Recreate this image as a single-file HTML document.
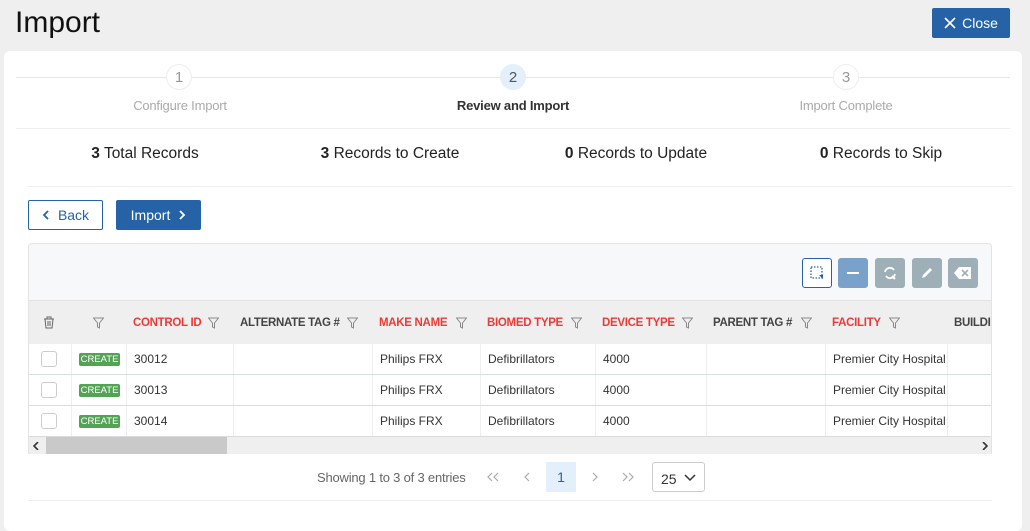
<!DOCTYPE html>
<html><head><meta charset="utf-8"><style>
*{box-sizing:border-box;margin:0;padding:0}
body{width:1030px;height:514px;overflow:hidden;background:#efefef;font-family:"Liberation Sans",Arial,sans-serif;position:relative;color:#333}
.abs{position:absolute}
h1{position:absolute;left:15px;top:6px;font-size:30px;font-weight:400;color:#111}
.close{left:932px;top:8px;width:78px;height:30px;background:#2563a6;color:#fff;font-size:14px;display:flex;align-items:center;justify-content:center;gap:6px;border-radius:2px}
.panel{left:4px;top:51px;width:1018px;height:480px;background:#fff;border-radius:6px}
.line{height:1px;background:#e6e6e6}
.circ{width:26px;height:26px;border-radius:50%;background:#fff;border:1px solid #eee;font-size:15px;color:#999;display:flex;align-items:center;justify-content:center}
.lbl{font-size:13px;color:#aaa;transform:translateX(-50%);white-space:nowrap;letter-spacing:-0.2px}
.stat{font-size:15.5px;color:#222;transform:translateX(-50%);white-space:nowrap}
.btn{height:30px;border-radius:2px;font-size:14px;display:flex;align-items:center;justify-content:center;gap:8px}
.grid{left:28px;top:243px;width:964px;height:211px;border:1px solid #e3e3e3;border-bottom:none;border-radius:4px 4px 0 0;overflow:hidden}
.tb{position:absolute;left:0;top:0;width:964px;height:57px;background:#f7f8fa;border-bottom:1px solid #e3e3e3}
.ib{position:absolute;top:14px;width:30px;height:30px;border-radius:3px;display:flex;align-items:center;justify-content:center}
.hdr{position:absolute;left:0;top:57px;width:964px;height:43px;background:#efefef;font-size:11.5px;font-weight:700;color:#444;letter-spacing:-0.3px}
.h{position:absolute;top:16px;white-space:nowrap}
.f{position:absolute;top:16px}
.red{color:#ee3a36}
.row{position:absolute;left:0;width:964px;height:31px;border-bottom:1px solid #d8dce0;font-size:12px;color:#333}
.c{position:absolute;top:0;height:30px;border-left:1px solid #eceef0;padding-left:7px;line-height:30px;white-space:nowrap}
.cb{position:absolute;left:12px;top:7px;width:16px;height:16px;border:1px solid #ccc;border-radius:3px}
.tag{position:absolute;left:7px;top:9px;width:41px;height:13px;background:#52a454;border-radius:2px}
.tag span{position:absolute;left:0;top:1px;width:41px;text-align:center;color:#fff;font-size:9.5px;line-height:11px}
.sb{position:absolute;left:0;top:193px;width:964px;height:18px;background:#efefef}
</style></head><body>
<h1>Import</h1>
<div class="abs close"><svg width="12" height="12" viewBox="0 0 12 12"><path d="M1 1L11 11M11 1L1 11" stroke="#fff" stroke-width="1.6"/></svg>Close</div>
<div class="abs panel"></div>
<div class="abs line" style="left:16px;top:77px;width:994px"></div>
<div class="abs circ" style="left:166px;top:64px">1</div>
<div class="abs circ" style="left:500px;top:64px;background:#e3effa;border-color:#e3effa;color:#555">2</div>
<div class="abs circ" style="left:833px;top:64px">3</div>
<div class="abs lbl" style="left:180px;top:98px">Configure Import</div>
<div class="abs lbl" style="left:513px;top:98px;color:#333;font-weight:700">Review and Import</div>
<div class="abs lbl" style="left:846px;top:98px">Import Complete</div>
<div class="abs line" style="left:16px;top:128px;width:994px;background:#eee"></div>
<div class="abs stat" style="left:145px;top:145px"><b>3</b> Total Records</div>
<div class="abs stat" style="left:390px;top:145px"><b>3</b> Records to Create</div>
<div class="abs stat" style="left:636px;top:145px"><b>0</b> Records to Update</div>
<div class="abs stat" style="left:881px;top:145px"><b>0</b> Records to Skip</div>
<div class="abs line" style="left:28px;top:186px;width:984px;background:#eee"></div>
<div class="abs btn" style="left:28px;top:200px;width:75px;border:1px solid #2563a6;color:#2563a6"><svg width="8" height="10" viewBox="0 0 8 10"><path d="M6 1L2 5L6 9" stroke="#2563a6" stroke-width="1.8" fill="none"/></svg>Back</div>
<div class="abs btn" style="left:116px;top:200px;width:85px;background:#2563a6;color:#fff">Import<svg width="8" height="10" viewBox="0 0 8 10"><path d="M2 1L6 5L2 9" stroke="#fff" stroke-width="1.8" fill="none"/></svg></div>
<div class="abs grid">
<div class="tb">
<div class="ib" style="left:773px;border:1px solid #2563a6;background:#fff"><svg width="16" height="16" viewBox="0 0 16 16"><rect x="2" y="2" width="11" height="11" fill="none" stroke="#2563a6" stroke-width="1.3" stroke-dasharray="1.5 1.5"/><path d="M10 10L14 14L14 10Z" fill="#2563a6"/></svg></div>
<div class="ib" style="left:809px;background:#7aa1c9"><div style="width:12px;height:2px;background:#fff"></div></div>
<div class="ib" style="left:846px;background:#9eafb8"><svg width="16" height="16" viewBox="0 0 16 16"><path d="M3 7A5 5 0 0 1 12 5M13 9A5 5 0 0 1 4 11" stroke="#fff" stroke-width="1.8" fill="none"/><path d="M10 11L13 14" stroke="#fff" stroke-width="2"/></svg></div>
<div class="ib" style="left:883px;background:#9eafb8"><svg width="16" height="16" viewBox="0 0 16 16"><path d="M3 13L4 10L11 3L13 5L6 12Z" fill="#fff"/></svg></div>
<div class="ib" style="left:919px;background:#9eafb8"><svg width="20" height="14" viewBox="0 0 20 14"><path d="M6 1H18V13H6L1 7Z" fill="#fff"/><path d="M9 4L15 10M15 4L9 10" stroke="#9eafb8" stroke-width="1.6"/></svg></div>
</div>
<div class="hdr">
<svg class="f" style="left:14px;top:15px" width="12" height="13" viewBox="0 0 12 13"><path d="M1 3H11M4 3V1H8V3M2 3L3 12H9L10 3M5 5V10M7 5V10" stroke="#666" fill="none"/></svg>
<svg class="f" style="left:64px" width="11" height="12" viewBox="0 0 11 12"><path d="M0.5 1H10.5L6.5 6V11L4.5 10V6Z" fill="none" stroke="#888"/></svg>
<span class="h red" style="left:104px">CONTROL ID</span>
<svg class="f" style="left:179px" width="11" height="12" viewBox="0 0 11 12"><path d="M0.5 1H10.5L6.5 6V11L4.5 10V6Z" fill="none" stroke="#888"/></svg>
<span class="h" style="left:211px">ALTERNATE TAG #</span>
<svg class="f" style="left:318px" width="11" height="12" viewBox="0 0 11 12"><path d="M0.5 1H10.5L6.5 6V11L4.5 10V6Z" fill="none" stroke="#888"/></svg>
<span class="h red" style="left:350px">MAKE NAME</span>
<svg class="f" style="left:427px" width="11" height="12" viewBox="0 0 11 12"><path d="M0.5 1H10.5L6.5 6V11L4.5 10V6Z" fill="none" stroke="#888"/></svg>
<span class="h red" style="left:458px">BIOMED TYPE</span>
<svg class="f" style="left:542px" width="11" height="12" viewBox="0 0 11 12"><path d="M0.5 1H10.5L6.5 6V11L4.5 10V6Z" fill="none" stroke="#888"/></svg>
<span class="h red" style="left:573px">DEVICE TYPE</span>
<svg class="f" style="left:653px" width="11" height="12" viewBox="0 0 11 12"><path d="M0.5 1H10.5L6.5 6V11L4.5 10V6Z" fill="none" stroke="#888"/></svg>
<span class="h" style="left:684px">PARENT TAG #</span>
<svg class="f" style="left:772px" width="11" height="12" viewBox="0 0 11 12"><path d="M0.5 1H10.5L6.5 6V11L4.5 10V6Z" fill="none" stroke="#888"/></svg>
<span class="h red" style="left:803px">FACILITY</span>
<svg class="f" style="left:860px" width="11" height="12" viewBox="0 0 11 12"><path d="M0.5 1H10.5L6.5 6V11L4.5 10V6Z" fill="none" stroke="#888"/></svg>
<span class="h" style="left:925px">BUILDING</span>
</div>
<div class="row" style="top:100px"><div class="cb"></div><div class="c" style="left:42px;width:55px"><div class="tag"><span>CREATE</span></div></div><div class="c" style="left:97px;width:107px">30012</div><div class="c" style="left:204px;width:139px"></div><div class="c" style="left:343px;width:108px">Philips FRX</div><div class="c" style="left:451px;width:115px">Defibrillators</div><div class="c" style="left:566px;width:111px">4000</div><div class="c" style="left:677px;width:119px"></div><div class="c" style="left:796px;width:122px">Premier City Hospital</div><div class="c" style="left:918px;width:60px"></div></div>
<div class="row" style="top:131px"><div class="cb"></div><div class="c" style="left:42px;width:55px"><div class="tag"><span>CREATE</span></div></div><div class="c" style="left:97px;width:107px">30013</div><div class="c" style="left:204px;width:139px"></div><div class="c" style="left:343px;width:108px">Philips FRX</div><div class="c" style="left:451px;width:115px">Defibrillators</div><div class="c" style="left:566px;width:111px">4000</div><div class="c" style="left:677px;width:119px"></div><div class="c" style="left:796px;width:122px">Premier City Hospital</div><div class="c" style="left:918px;width:60px"></div></div>
<div class="row" style="top:162px"><div class="cb"></div><div class="c" style="left:42px;width:55px"><div class="tag"><span>CREATE</span></div></div><div class="c" style="left:97px;width:107px">30014</div><div class="c" style="left:204px;width:139px"></div><div class="c" style="left:343px;width:108px">Philips FRX</div><div class="c" style="left:451px;width:115px">Defibrillators</div><div class="c" style="left:566px;width:111px">4000</div><div class="c" style="left:677px;width:119px"></div><div class="c" style="left:796px;width:122px">Premier City Hospital</div><div class="c" style="left:918px;width:60px"></div></div>
<div class="sb"><div style="position:absolute;left:17px;top:0;width:181px;height:18px;background:#c9c9c9"></div>
<svg style="position:absolute;left:4px;top:5px" width="6" height="8" viewBox="0 0 6 8"><path d="M5 0L1 4L5 8" stroke="#333" stroke-width="1.6" fill="none"/></svg>
<svg style="position:absolute;left:953px;top:5px" width="6" height="8" viewBox="0 0 6 8"><path d="M1 0L5 4L1 8" stroke="#333" stroke-width="1.6" fill="none"/></svg></div>
</div>
<div class="abs" style="left:317px;top:470px;font-size:13px;color:#666;letter-spacing:-0.2px">Showing 1 to 3 of 3 entries</div>
<svg class="abs" style="left:487px;top:472px" width="12" height="10" viewBox="0 0 12 10"><path d="M5 1L1 5L5 9M11 1L7 5L11 9" stroke="#aaa" stroke-width="1.2" fill="none"/></svg>
<svg class="abs" style="left:524px;top:472px" width="6" height="10" viewBox="0 0 6 10"><path d="M5 1L1 5L5 9" stroke="#aaa" stroke-width="1.2" fill="none"/></svg>
<div class="abs" style="left:546px;top:462px;width:30px;height:30px;background:#e3effa;color:#2563a6;font-size:14px;display:flex;align-items:center;justify-content:center">1</div>
<svg class="abs" style="left:592px;top:472px" width="6" height="10" viewBox="0 0 6 10"><path d="M1 1L5 5L1 9" stroke="#aaa" stroke-width="1.2" fill="none"/></svg>
<svg class="abs" style="left:622px;top:472px" width="12" height="10" viewBox="0 0 12 10"><path d="M1 1L5 5L1 9M7 1L11 5L7 9" stroke="#aaa" stroke-width="1.2" fill="none"/></svg>
<div class="abs" style="left:652px;top:462px;width:53px;height:30px;border:1px solid #ccc;border-radius:3px;font-size:14px;color:#333;padding:8px 0 0 8px">25<svg style="position:absolute;left:31px;top:11px" width="12" height="8" viewBox="0 0 12 8"><path d="M1 1L6 6L11 1" stroke="#333" stroke-width="1.5" fill="none"/></svg></div>
<div class="abs line" style="left:28px;top:500px;width:964px;background:#eee"></div>
</body></html>
